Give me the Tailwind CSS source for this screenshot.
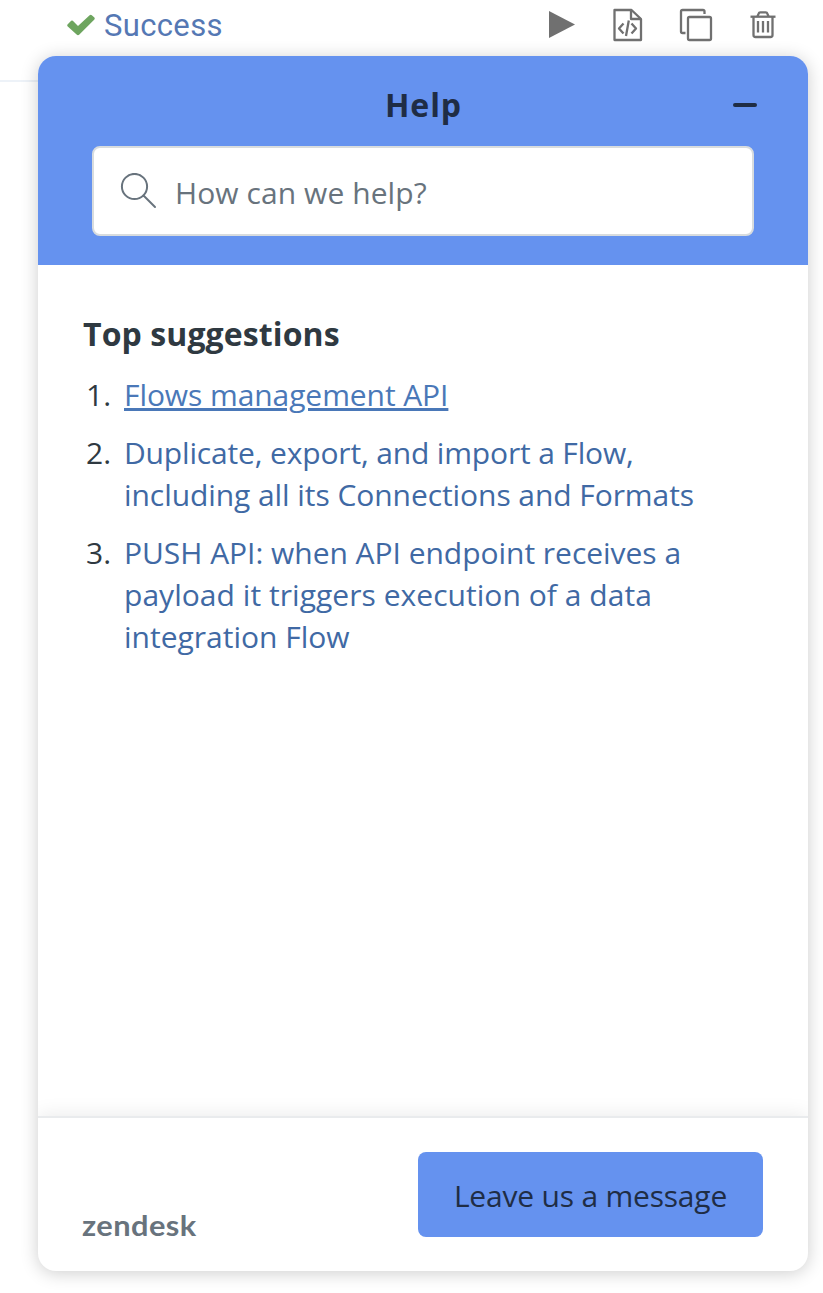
<!DOCTYPE html>
<html lang="en">
  <head>
    <meta charset="UTF-8" />
    <meta name="viewport" content="width=device-width, initial-scale=1.0" />
    <title>Help</title>
    <script src="https://cdn.jsdelivr.net/npm/@tailwindcss/browser@4"></script>
  </head>
  <body
    class="relative h-screen w-screen overflow-hidden bg-white font-['Open_Sans','Noto_Sans',sans-serif] text-[30px] text-[#2f3941]"
  >
    <!-- Flow row behind the widget -->
    <div class="mr-[17px] flex h-[82px] border-b-2 border-[#edf2f8] pl-[66px] pr-[29px]">
      <div class="flex h-[50px] w-full items-center">
        <svg class="h-[22px] w-[30px]" viewBox="0 0 30 22" fill="#6ea55f">
          <path d="M1.5 10.5 5.2 6.8Q6 6.2 6.8 6.8L12 12 23.6 1.2Q24.8.3 25.8 1.2L28.4 3.6Q29.2 4.6 28.4 5.6L13.4 20.6Q12 21.8 10.6 20.6L1.5 12.2Q.8 11.4 1.5 10.5Z" />
        </svg>
        <a class="ml-[8px] pt-[2px] font-[Roboto,sans-serif] text-[31px] leading-[50px] tracking-[0.35px] text-[#5578b4]">Success</a>
        <div class="ml-auto flex items-center">
          <svg class="h-[28px] w-[28px]" viewBox="0 0 28 28" fill="#707070">
            <path d="M1 0 27 13.5 1 27Z" />
          </svg>
          <svg class="ml-[37px] h-[34px] w-[30px]" viewBox="0 0 30 34" fill="none" stroke="#707070" stroke-width="2.3" stroke-linejoin="round">
            <path d="M1.5 2H18.5L28 11V32H1.5Z" />
            <path d="M18 2V11H28" />
            <path d="M10.5 15.5 6 20.5 10.5 25.5M18.5 15.5 23 20.5 18.5 25.5M15.8 12.5 13 28" />
          </svg>
          <svg class="ml-[36px] h-[34px] w-[34px]" viewBox="0 0 34 34" fill="none" stroke="#707070" stroke-width="2.3">
            <path d="M25.5 6V3.5Q25.5 2 24 2H3.5Q2 2 2 3.5V23.5Q2 25 3.5 25H6.5" />
            <rect x="9" y="9" width="23" height="23" rx="1.5" />
          </svg>
          <svg class="ml-[36px] h-[30px] w-[28px]" viewBox="0 0 28 30" fill="none" stroke="#707070" stroke-width="2.3">
            <path d="M1.5 6.7H26.5" />
            <path d="M8.5 6.5 9.5 3.9Q10 2.3 11.3 2.3H16.7Q18 2.3 18.5 3.9L19.5 6.5" />
            <path d="M4.5 6.5V25Q4.5 27 6.5 27H21.5Q23.5 27 23.5 25V6.5" />
            <path d="M9 11V22.5M14 11V22.5M19 11V22.5" />
          </svg>
        </div>
      </div>
    </div>

    <!-- Help widget, floats over the page -->
    <div
      class="absolute left-[38px] top-[56px] flex h-[1215px] w-[770px] flex-col overflow-hidden rounded-[18px] bg-white shadow-[0_2px_18px_rgba(0,0,0,0.2)]"
    >
      <header class="h-[209px] bg-[#6592ef] px-[54px] pt-[24px]">
        <div class="flex h-[50px] items-center">
          <h1 class="w-full pl-[1px] text-center text-[32px] font-bold tracking-[0.9px] text-[#1f2d45]">Help</h1>
          <button class="-ml-[21px] -mr-[3px] h-[4px] w-[24px] shrink-0 rounded-full bg-[#1f2d45]"></button>
        </div>
        <div class="mt-[16px] flex h-[90px] items-center rounded-[8px] border-2 border-[#d8dcde] bg-white pl-[26px]">
          <svg class="h-[37px] w-[37px]" viewBox="0 0 37 37" fill="none" stroke="#68737d" stroke-width="2">
            <circle cx="14.5" cy="13.5" r="12.6" />
            <path d="M23.5 22.5 35 34" stroke-linecap="round" />
          </svg>
          <span class="ml-[18px] pt-[3px] tracking-[0.08px] text-[#68737d]">How can we help?</span>
        </div>
      </header>

      <main class="flex-1 px-[45px] pt-[48px]">
        <h2 class="text-[32px] font-bold leading-[42px] tracking-[0.1px]">Top suggestions</h2>
        <ol class="mt-[19px] flex flex-col gap-[16px] leading-[42px] text-[#4069a4]">
          <li class="flex">
            <span class="w-[41px] pl-[3px] text-[#2f3941]">1.</span>
            <a class="tracking-[-0.08px] text-[#4a78b8] underline decoration-[3px] underline-offset-[2px]">Flows management API</a>
          </li>
          <li class="flex">
            <span class="w-[41px] pl-[3px] text-[#2f3941]">2.</span>
            <a class="whitespace-nowrap">
              <span class="block tracking-[-0.16px]">Duplicate, export, and import a Flow,</span>
              <span class="block tracking-[-0.07px]">including all its Connections and Formats</span>
            </a>
          </li>
          <li class="flex">
            <span class="w-[41px] pl-[3px] text-[#2f3941]">3.</span>
            <a class="whitespace-nowrap">
              <span class="block tracking-[-0.03px]">PUSH API: when API endpoint receives a</span>
              <span class="block tracking-[0.04px]">payload it triggers execution of a data</span>
              <span class="block">integration Flow</span>
            </a>
          </li>
        </ol>
      </main>

      <footer class="flex h-[155px] justify-between border-t-2 border-[#e9ebed] pl-[44px] pr-[45px] pt-[34px] shadow-[0_-2px_18px_rgba(0,0,0,0.08)]">
        <span class="mt-[53px] origin-left scale-x-[1.1] font-[Lato,sans-serif] text-[28px] font-bold leading-[40px] tracking-[0.4px] text-[#68737d]">zendesk</span>
        <button class="h-[85px] w-[345px] rounded-[8px] bg-[#6592ef] pt-[2px] tracking-[-0.2px] text-[#1f2d45]">Leave us a message</button>
      </footer>
    </div>
  </body>
</html>
